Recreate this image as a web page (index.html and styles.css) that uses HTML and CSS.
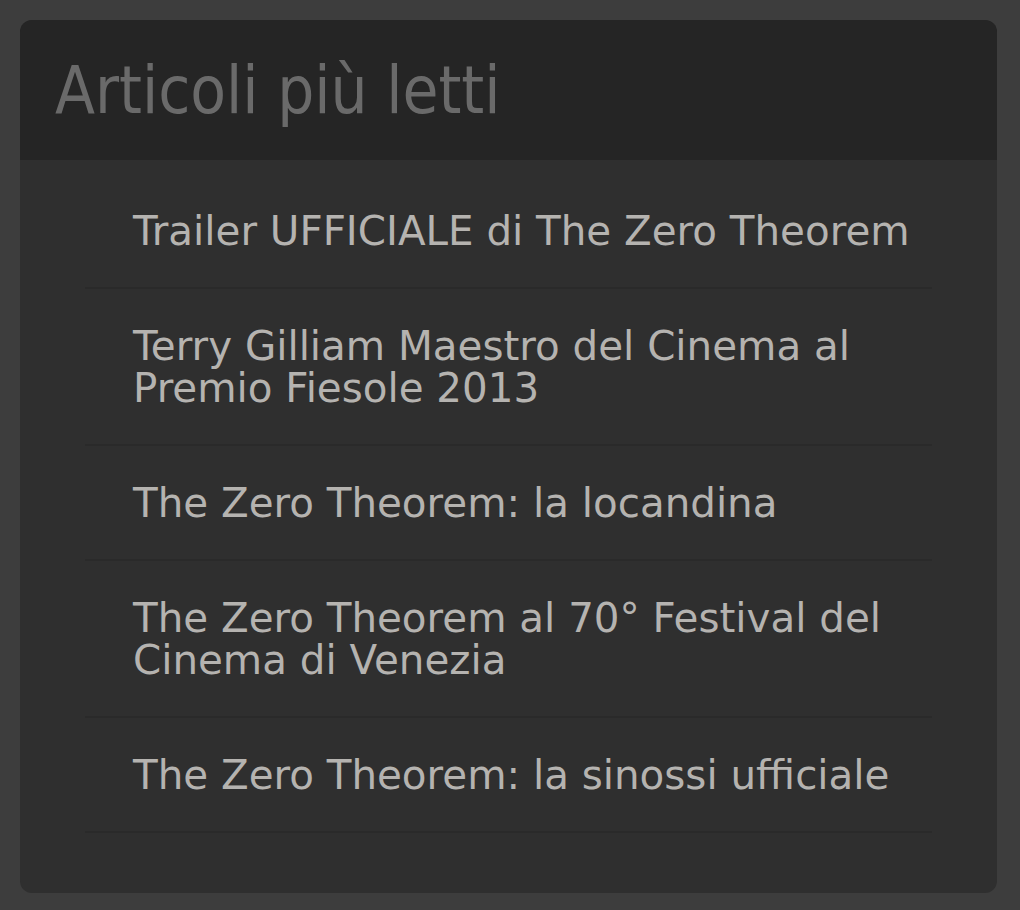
FILE: index.html
```html
<!DOCTYPE html>
<html lang="it">
<head>
<meta charset="utf-8">
<title>Articoli più letti</title>
<link rel="stylesheet" href="styles.css">
</head>
<body>
<div class="widget">
  <h3 class="widget-title">Articoli più letti</h3>
  <ul class="list">
    <li class="item"><a href="#">Trailer UFFICIALE di The Zero Theorem</a></li>
    <li class="item"><a href="#">Terry Gilliam Maestro del Cinema al Premio Fiesole 2013</a></li>
    <li class="item"><a href="#">The Zero Theorem: la locandina</a></li>
    <li class="item"><a href="#">The Zero Theorem al 70° Festival del Cinema di Venezia</a></li>
    <li class="item"><a href="#">The Zero Theorem: la sinossi ufficiale</a></li>
  </ul>
</div>
</body>
</html>
```
FILE: styles.css
```css
html, body {
  margin: 0;
  padding: 0;
  background: #3d3d3d;
}
body {
  padding: 20px 23px 17px 20px;
  height: 910px;
  box-sizing: border-box;
}
.widget {
  background: #2f2f2f;
  border-radius: 12px;
  overflow: hidden;
  height: 873px;
  box-sizing: border-box;
}
.widget-title {
  margin: 0;
  background: #252525;
  height: 140px;
  box-sizing: border-box;
  padding: 36px 0 0 35px;
  font-family: "DejaVu Sans Condensed", "DejaVu Sans", sans-serif;
  font-stretch: condensed;
  font-weight: normal;
  font-size: 65px;
  line-height: 70px;
  color: #6a6a6a;
}
.list {
  list-style: none;
  margin: 0 65px;
  padding: 14px 0 0 0;
}
.item {
  border-bottom: 2px solid #2a2a2a;
  padding: 36px 20px 35px 48px;
  font-family: "DejaVu Sans", sans-serif;
  font-size: 40.4px;
  line-height: 42px;
}
.item a {
  color: #b5b3b0;
  text-decoration: none;
}
```
